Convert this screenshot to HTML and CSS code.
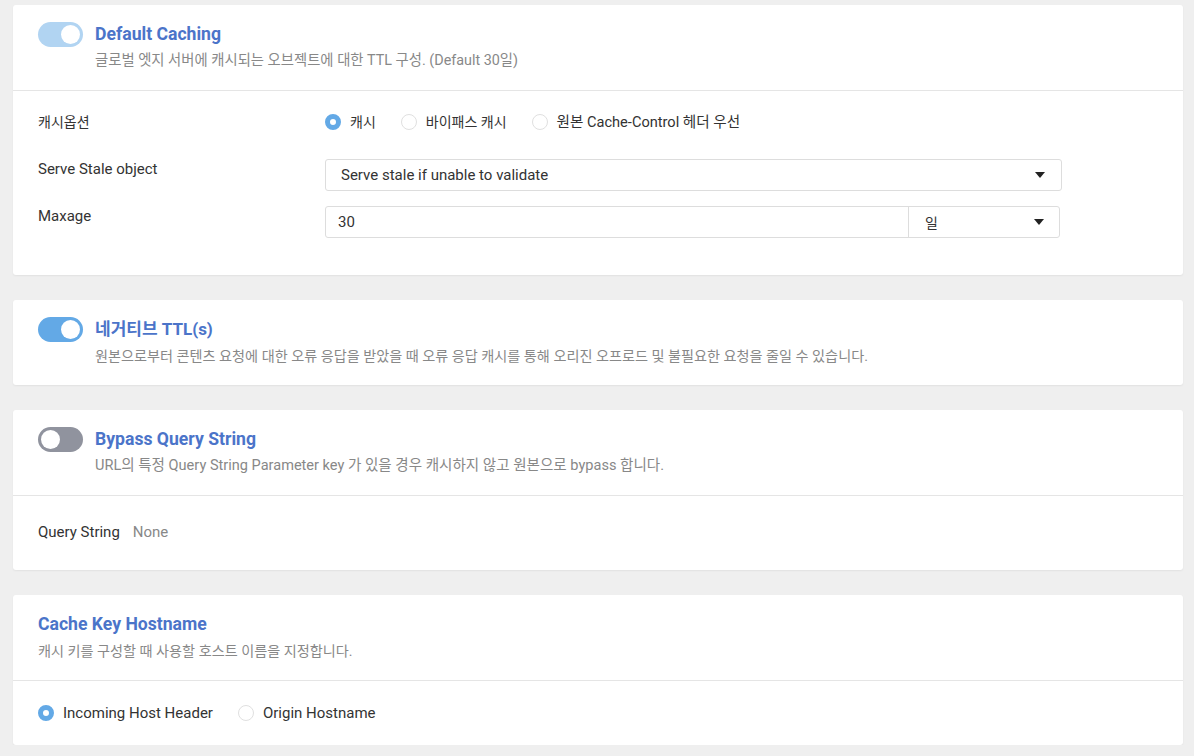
FILE: index.html
```html
<!DOCTYPE html>
<html lang="ko">
<head>
<meta charset="utf-8">
<link rel="stylesheet" href="styles.css">
</head>
<body>
<div class="page">
  <section class="card">
    <div class="card-head">
      <div class="head-row">
        <span class="toggle toggle-on toggle-disabled"><span class="knob"></span></span>
        <h2 class="title">Default Caching</h2>
      </div>
      <p class="desc with-toggle desc-mixed">글로벌 엣지 서버에 캐시되는 오브젝트에 대한 TTL 구성. (Default 30일)</p>
    </div>
    <div class="card-body body-form">
      <div class="form-row row-radio">
        <div class="label ko">캐시옵션</div>
        <div class="value radios">
          <label class="radio checked ko"><span class="dot"></span>캐시</label>
          <label class="radio ko"><span class="dot"></span>바이패스 캐시</label>
          <label class="radio mixed"><span class="dot"></span>원본 Cache-Control 헤더 우선</label>
        </div>
      </div>
      <div class="form-row row-select">
        <div class="label">Serve Stale object</div>
        <div class="value">
          <div class="select">
            <span>Serve stale if unable to validate</span>
            <span class="caret"></span>
          </div>
        </div>
      </div>
      <div class="form-row row-select">
        <div class="label">Maxage</div>
        <div class="value">
          <div class="group">
            <div class="num">30</div>
            <div class="unit"><span class="ko">일</span><span class="caret"></span></div>
          </div>
        </div>
      </div>
    </div>
  </section>

  <section class="card">
    <div class="card-head">
      <div class="head-row">
        <span class="toggle toggle-on"><span class="knob"></span></span>
        <h2 class="title title-ko">네거티브 TTL(s)</h2>
      </div>
      <p class="desc with-toggle">원본으로부터 콘텐츠 요청에 대한 오류 응답을 받았을 때 오류 응답 캐시를 통해 오리진 오프로드 및 불필요한 요청을 줄일 수 있습니다.</p>
    </div>
  </section>

  <section class="card">
    <div class="card-head">
      <div class="head-row">
        <span class="toggle toggle-off"><span class="knob"></span></span>
        <h2 class="title">Bypass Query String</h2>
      </div>
      <p class="desc with-toggle desc-en">URL의 특정 Query String Parameter key 가 있을 경우 캐시하지 않고 원본으로 bypass 합니다.</p>
    </div>
    <div class="card-body body-qs">
      <span class="label-inline">Query String</span><span class="muted">None</span>
    </div>
  </section>

  <section class="card">
    <div class="card-head">
      <div class="head-row">
        <h2 class="title">Cache Key Hostname</h2>
      </div>
      <p class="desc">캐시 키를 구성할 때 사용할 호스트 이름을 지정합니다.</p>
    </div>
    <div class="card-body body-host">
      <div class="radios">
        <label class="radio checked"><span class="dot"></span>Incoming Host Header</label>
        <label class="radio"><span class="dot"></span>Origin Hostname</label>
      </div>
    </div>
  </section>
</div>
</body>
</html>
```

FILE: styles.css
```css
* { box-sizing: border-box; }
html, body { margin: 0; padding: 0; }
body {
  background: #efefef;
  font-family: Roboto, "Noto Sans CJK KR", sans-serif;
  color: #333;
  font-size: 15px;
}
.ko { font-size: 14px; }
.mixed { font-size: 14.6px; }
.page {
  padding: 5px 11px 0 13px;
  display: flex;
  flex-direction: column;
  gap: 25px;
}
.card {
  background: #fff;
  border-radius: 3px;
  box-shadow: 0 1px 2px rgba(0,0,0,0.06);
}
.card-head {
  padding: 17px 25px 19px;
}
.head-row {
  display: flex;
  align-items: center;
  height: 24px;
}
.title {
  margin: 0;
  font-size: 17.6px;
  font-weight: 700;
  color: #4b74c9;
  line-height: 24px;
}
.title-ko { font-size: 17px; }
.desc {
  margin: 5px 0 0;
  line-height: 20px;
  font-size: 14.15px;
  color: #888;
}
.desc-mixed { font-size: 14.35px; }
.desc-en { font-size: 14.55px; }
.desc.with-toggle { padding-left: 57px; }
.toggle {
  position: relative;
  width: 45px;
  height: 25px;
  border-radius: 13px;
  margin-right: 12px;
  flex: none;
}
.toggle .knob {
  position: absolute;
  top: 3px;
  width: 19px;
  height: 19px;
  border-radius: 50%;
  background: #fff;
}
.toggle-on { background: #63a9e6; }
.toggle-on .knob { right: 3px; }
.toggle-disabled { background: #b1d4f2; }
.toggle-off { background: #90939e; }
.toggle-off .knob { left: 3px; }

.card-body { border-top: 1px solid #e5e5e5; }
.body-form { padding: 21px 25px 37px; }
.form-row {
  display: flex;
  align-items: flex-start;
}
.form-row .label {
  width: 287px;
  flex: none;
  line-height: 20px;
  color: #333;
}
.form-row .value { flex: 1; }
.row-radio { margin-bottom: 27px; }
.row-select + .row-select { margin-top: 15px; }
.radios {
  display: flex;
  align-items: center;
  line-height: 20px;
}
.radio {
  display: flex;
  align-items: center;
  margin-right: 25px;
  color: #333;
}
.radio .dot {
  width: 16px;
  height: 16px;
  border-radius: 50%;
  border: 1px solid #e0e0e0;
  margin-right: 9px;
  background: #fff;
  flex: none;
}
.radio.checked .dot {
  border: 5px solid #63a9e6;
}
.select {
  width: 737px;
  height: 32px;
  border: 1px solid #ddd;
  border-radius: 3px;
  display: flex;
  align-items: center;
  justify-content: space-between;
  padding: 0 16px 0 15px;
  color: #333;
}
.caret {
  width: 0;
  height: 0;
  border-left: 5px solid transparent;
  border-right: 5px solid transparent;
  border-top: 6px solid #222;
}
.group {
  width: 735px;
  height: 32px;
  border: 1px solid #ddd;
  border-radius: 3px;
  display: flex;
}
.num {
  flex: 1;
  display: flex;
  align-items: center;
  padding-left: 12px;
  border-right: 1px solid #ddd;
}
.unit {
  width: 150px;
  display: flex;
  align-items: center;
  justify-content: space-between;
  padding: 0 15px 0 16px;
}
.body-qs { padding: 26px 25px 28px; line-height: 20px; }
.label-inline { margin-right: 13px; color: #333; }
.muted { color: #888; }
.body-host { padding: 22px 25px 22px; }
```
